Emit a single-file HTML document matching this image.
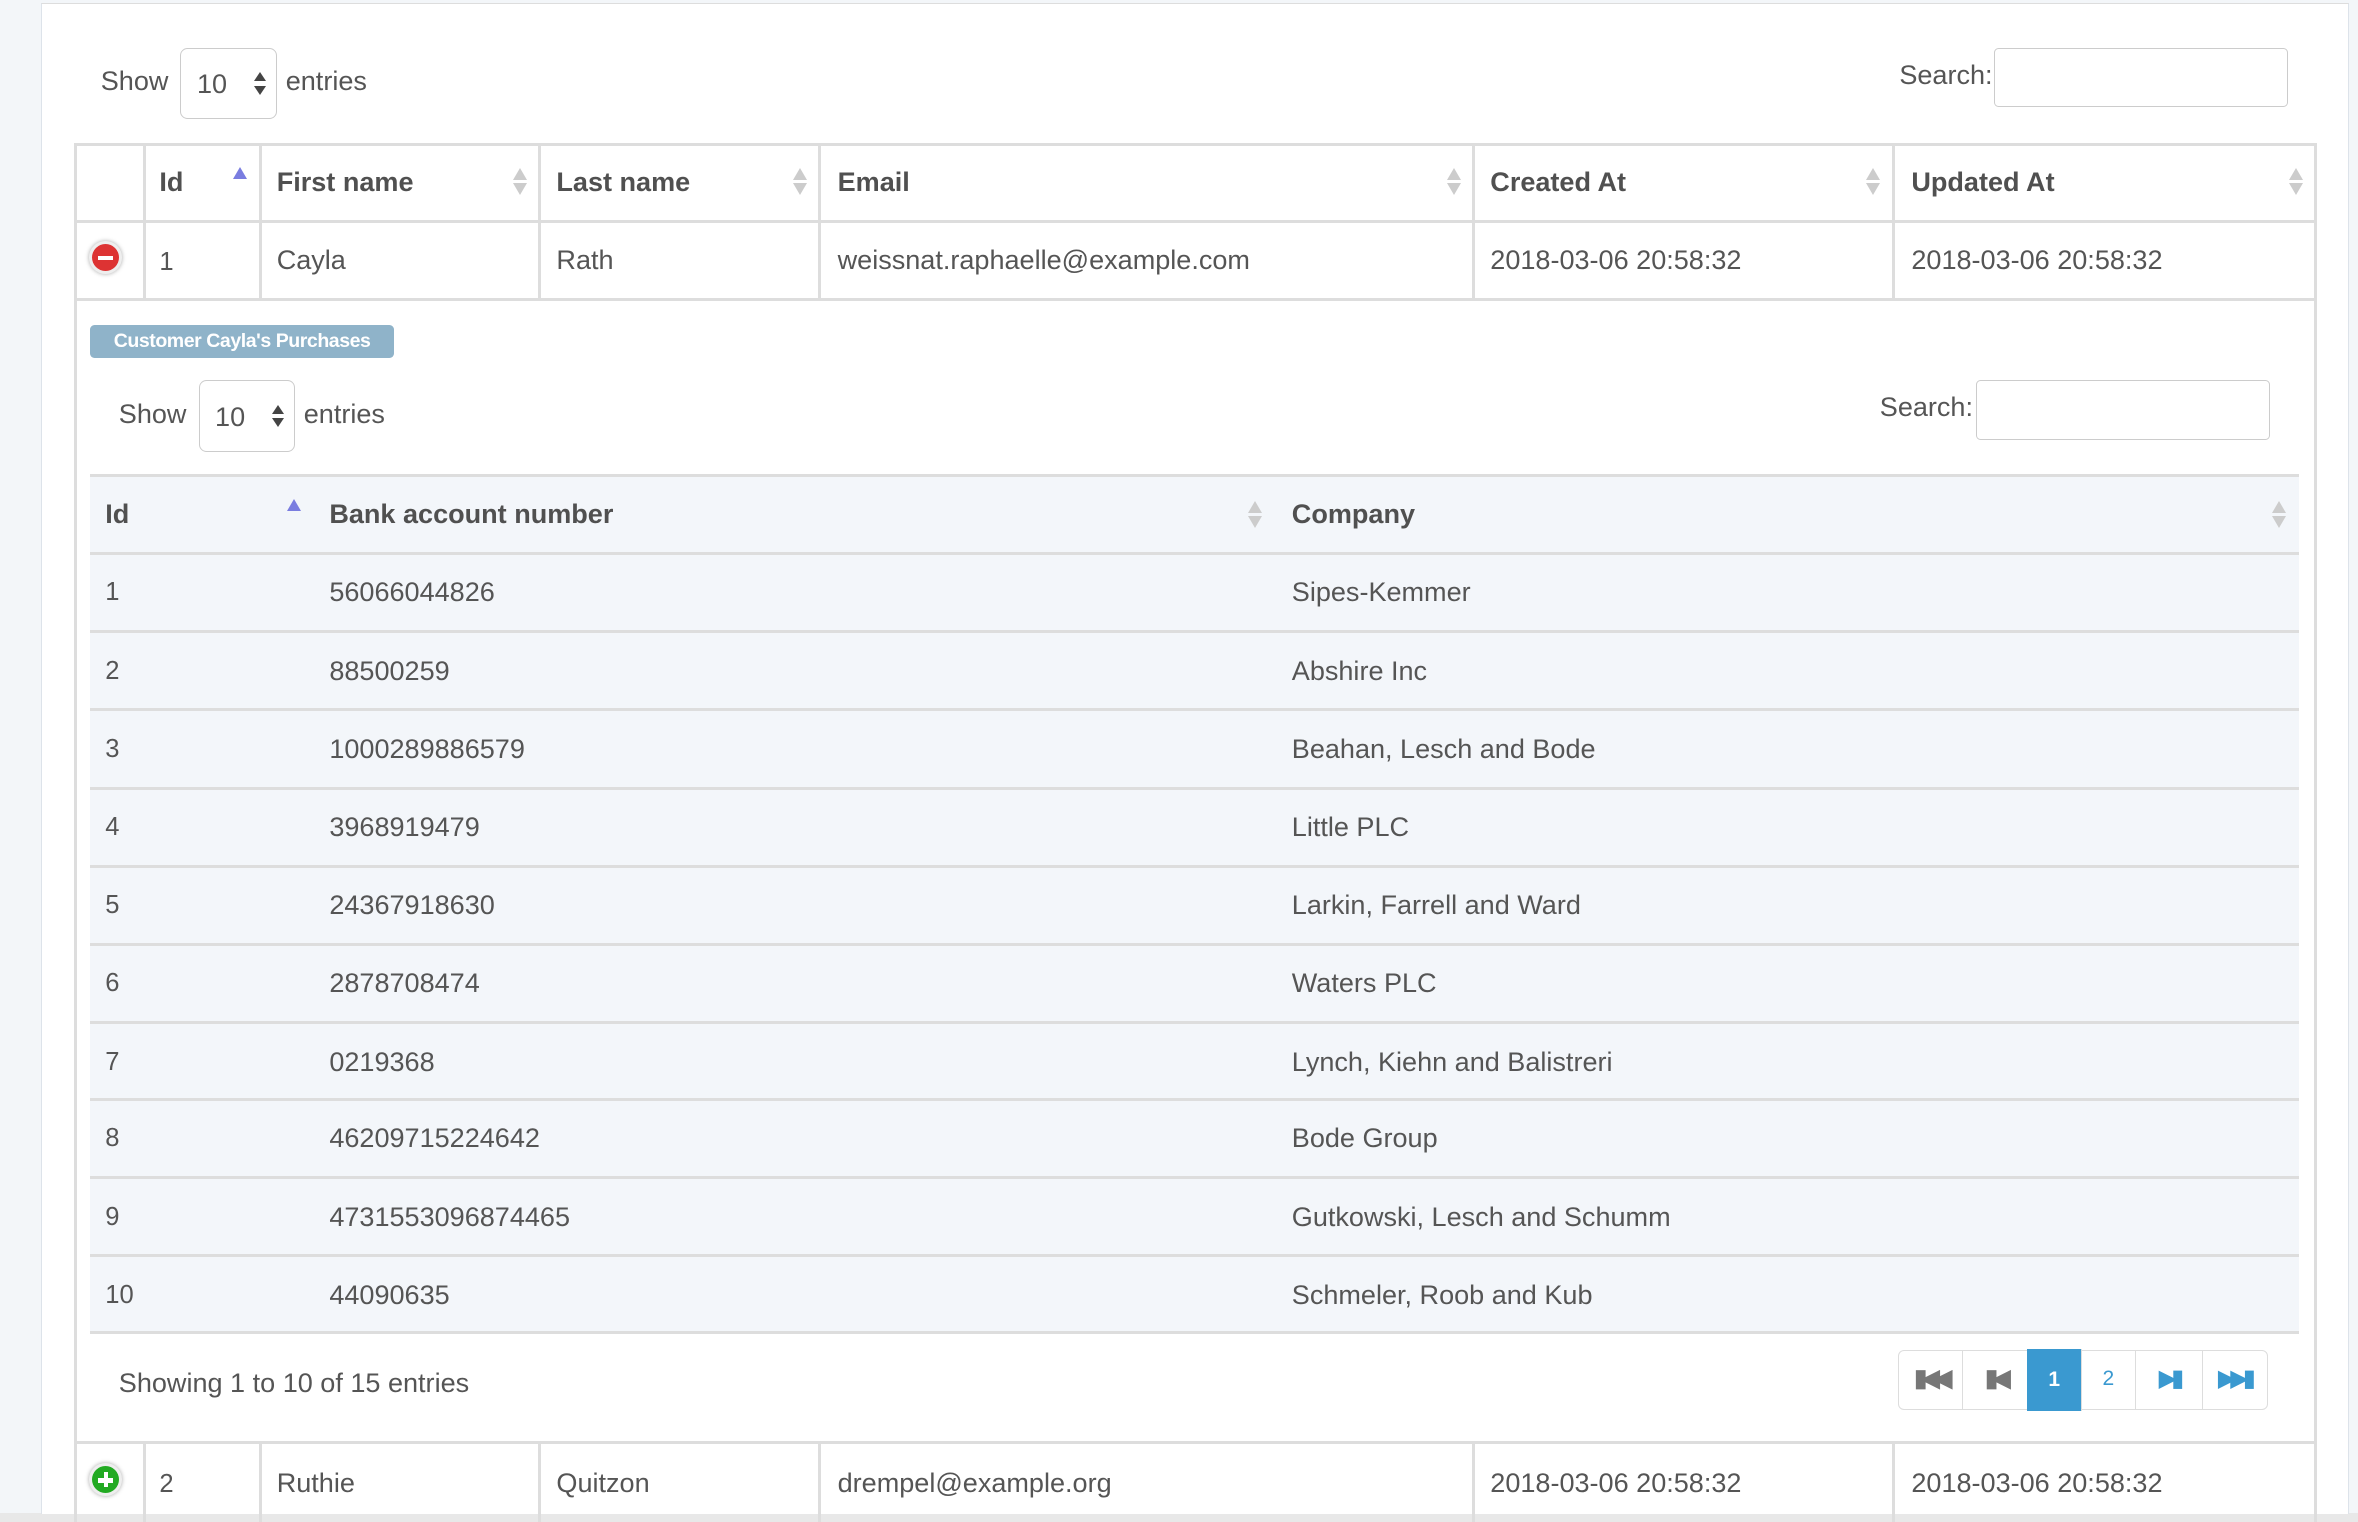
<!DOCTYPE html>
<html><head><meta charset="utf-8"><style>
html,body{margin:0;padding:0;background:#f3f6f9;overflow:hidden}
#r{zoom:1.50383;position:relative;width:1568px;height:1012px;font-family:"Liberation Sans",sans-serif;color:#555;font-size:18px;background:#f3f6f9}
.a{position:absolute}
#panel{left:27px;top:2px;width:1534px;height:1004px;background:#fff;border-left:1px solid #dde3ea;border-right:1px solid #dde3ea;border-top:1px solid #ddd}
.sel{border:1px solid #ccc;border-radius:5px;background:#fff}
.inp{border:1px solid #ccc;border-radius:3px;background:#fff}
.hl{background:#ddd;height:2px}
.vl{background:#ddd;width:2px}
.t{position:absolute;white-space:nowrap;line-height:20px}
.b{font-weight:bold;color:#505050}
.arr{position:absolute;width:0;height:0;border-left:5px solid transparent;border-right:5px solid transparent}
.up{border-bottom:8px solid #ccc}.dn{border-top:8px solid #ccc}
.pg{position:absolute;top:898px;height:39px;border-right:1px solid #ddd;text-align:center;line-height:39px;font-size:14px;color:#3a99d0}
</style></head><body><div id="r">
<div class="a" style="left:0;top:1006px;width:1568px;height:6px;background:#e8e8e8"></div>
<div class="a" id="panel"></div>

<div class="t" style="left:67px;top:44px">Show</div>
<div class="a sel" style="left:120px;top:32px;width:63px;height:46px"></div>
<div class="t" style="left:131px;top:46px">10</div>
<div class="arr" style="left:169px;top:48px;border-left-width:4px;border-right-width:4px;border-bottom:6px solid #444"></div>
<div class="arr" style="left:169px;top:57px;border-left-width:4px;border-right-width:4px;border-top:6px solid #444"></div>
<div class="t" style="left:190px;top:44px">entries</div>
<div class="t" style="left:1263px;top:40px">Search:</div>
<div class="a inp" style="left:1326px;top:32px;width:194px;height:38px"></div>

<!-- outer table -->
<div class="a" style="left:49px;top:95px;width:1491px;height:1px;background:#ddd"></div>
<div class="a" style="left:49px;top:95px;width:1492px;height:918px;border:2px solid #ddd;box-sizing:border-box;border-bottom:none"></div>
<div class="a hl" style="left:49px;top:146px;width:1491px"></div>
<div class="a hl" style="left:49px;top:198px;width:1491px"></div>
<div class="a hl" style="left:49px;top:958px;width:1491px"></div>
<div class="a vl" style="left:95px;top:95px;height:104px"></div>
<div class="a vl" style="left:172px;top:95px;height:104px"></div>
<div class="a vl" style="left:358px;top:95px;height:104px"></div>
<div class="a vl" style="left:544px;top:95px;height:104px"></div>
<div class="a vl" style="left:979px;top:95px;height:104px"></div>
<div class="a vl" style="left:1258px;top:95px;height:104px"></div>
<div class="a vl" style="left:95px;top:959px;height:53px"></div>
<div class="a vl" style="left:172px;top:959px;height:53px"></div>
<div class="a vl" style="left:358px;top:959px;height:53px"></div>
<div class="a vl" style="left:544px;top:959px;height:53px"></div>
<div class="a vl" style="left:979px;top:959px;height:53px"></div>
<div class="a vl" style="left:1258px;top:959px;height:53px"></div>

<div class="t b" style="left:106px;top:111px">Id</div>
<div class="arr" style="left:155px;top:111px;border-bottom:8px solid #7a7de0"></div>
<div class="t b" style="left:184px;top:111px">First name</div>
<div class="t b" style="left:370px;top:111px">Last name</div>
<div class="t b" style="left:557px;top:111px">Email</div>
<div class="t b" style="left:991px;top:111px">Created At</div>
<div class="t b" style="left:1271px;top:111px">Updated At</div>
<div class="arr up" style="left:341px;top:112px"></div><div class="arr dn" style="left:341px;top:122px"></div>
<div class="arr up" style="left:527px;top:112px"></div><div class="arr dn" style="left:527px;top:122px"></div>
<div class="arr up" style="left:962px;top:112px"></div><div class="arr dn" style="left:962px;top:122px"></div>
<div class="arr up" style="left:1241px;top:112px"></div><div class="arr dn" style="left:1241px;top:122px"></div>
<div class="arr up" style="left:1522px;top:112px"></div><div class="arr dn" style="left:1522px;top:122px"></div>

<div class="a" style="left:61px;top:162px;width:18px;height:18px;border-radius:50%;background:#d33;box-shadow:0 0 0 2px #eee,0 0 3px 2px #aaa"></div>
<div class="a" style="left:65px;top:170px;width:10px;height:3px;background:#fff"></div>
<div class="t" style="left:106px;top:164px;font-size:17px">1</div>
<div class="t" style="left:184px;top:163px">Cayla</div>
<div class="t" style="left:370px;top:163px">Rath</div>
<div class="t" style="left:557px;top:163px">weissnat.raphaelle@example.com</div>
<div class="t" style="left:991px;top:163px">2018-03-06 20:58:32</div>
<div class="t" style="left:1271px;top:163px">2018-03-06 20:58:32</div>

<div class="a" style="left:61px;top:975px;width:18px;height:18px;border-radius:50%;background:#2a2;box-shadow:0 0 0 2px #eee,0 0 3px 2px #aaa"></div>
<div class="a" style="left:65px;top:983px;width:10px;height:3px;background:#fff"></div>
<div class="a" style="left:69px;top:979px;width:3px;height:10px;background:#fff"></div>
<div class="t" style="left:106px;top:977px;font-size:17px">2</div>
<div class="t" style="left:184px;top:976px">Ruthie</div>
<div class="t" style="left:370px;top:976px">Quitzon</div>
<div class="t" style="left:557px;top:976px">drempel@example.org</div>
<div class="t" style="left:991px;top:976px">2018-03-06 20:58:32</div>
<div class="t" style="left:1271px;top:976px">2018-03-06 20:58:32</div>

<!-- nested -->
<div class="a" style="left:60px;top:216px;width:202px;height:22px;background:#8fb3c9;border-radius:3px;color:#fff;font-size:13px;font-weight:bold;line-height:22px;text-align:center;letter-spacing:-0.3px">Customer Cayla's Purchases</div>
<div class="t" style="left:79px;top:265px">Show</div>
<div class="a sel" style="left:132px;top:253px;width:63px;height:46px"></div>
<div class="t" style="left:143px;top:267px">10</div>
<div class="arr" style="left:181px;top:269px;border-left-width:4px;border-right-width:4px;border-bottom:6px solid #444"></div>
<div class="arr" style="left:181px;top:278px;border-left-width:4px;border-right-width:4px;border-top:6px solid #444"></div>
<div class="t" style="left:202px;top:265px">entries</div>
<div class="t" style="left:1250px;top:261px">Search:</div>
<div class="a inp" style="left:1314px;top:253px;width:194px;height:38px"></div>

<div class="a" style="left:60px;top:316px;width:1469px;height:571px;background:#f3f6fa"></div>
<div class="a hl" style="left:60px;top:315px;width:1469px"></div>
<div class="a hl" style="left:60px;top:367px;width:1469px"></div>
<div class="a hl" style="left:60px;top:419px;width:1469px"></div>
<div class="a hl" style="left:60px;top:471px;width:1469px"></div>
<div class="a hl" style="left:60px;top:523px;width:1469px"></div>
<div class="a hl" style="left:60px;top:575px;width:1469px"></div>
<div class="a hl" style="left:60px;top:627px;width:1469px"></div>
<div class="a hl" style="left:60px;top:679px;width:1469px"></div>
<div class="a hl" style="left:60px;top:730px;width:1469px"></div>
<div class="a hl" style="left:60px;top:782px;width:1469px"></div>
<div class="a hl" style="left:60px;top:834px;width:1469px"></div>
<div class="a hl" style="left:60px;top:885px;width:1469px"></div>

<div class="t b" style="left:70px;top:332px">Id</div>
<div class="arr" style="left:191px;top:332px;border-bottom:8px solid #7a7de0"></div>
<div class="t b" style="left:219px;top:332px">Bank account number</div>
<div class="arr up" style="left:830px;top:333px"></div><div class="arr dn" style="left:830px;top:343px"></div>
<div class="t b" style="left:859px;top:332px">Company</div>
<div class="arr up" style="left:1511px;top:333px"></div><div class="arr dn" style="left:1511px;top:343px"></div>

<div class="t" style="left:70px;top:384px;font-size:17px">1</div><div class="t" style="left:219px;top:384px">56066044826</div><div class="t" style="left:859px;top:384px">Sipes-Kemmer</div>
<div class="t" style="left:70px;top:436px;font-size:17px">2</div><div class="t" style="left:219px;top:436px">88500259</div><div class="t" style="left:859px;top:436px">Abshire Inc</div>
<div class="t" style="left:70px;top:488px;font-size:17px">3</div><div class="t" style="left:219px;top:488px">1000289886579</div><div class="t" style="left:859px;top:488px">Beahan, Lesch and Bode</div>
<div class="t" style="left:70px;top:540px;font-size:17px">4</div><div class="t" style="left:219px;top:540px">3968919479</div><div class="t" style="left:859px;top:540px">Little PLC</div>
<div class="t" style="left:70px;top:592px;font-size:17px">5</div><div class="t" style="left:219px;top:592px">24367918630</div><div class="t" style="left:859px;top:592px">Larkin, Farrell and Ward</div>
<div class="t" style="left:70px;top:644px;font-size:17px">6</div><div class="t" style="left:219px;top:644px">2878708474</div><div class="t" style="left:859px;top:644px">Waters PLC</div>
<div class="t" style="left:70px;top:696px;font-size:17px">7</div><div class="t" style="left:219px;top:696px">0219368</div><div class="t" style="left:859px;top:696px">Lynch, Kiehn and Balistreri</div>
<div class="t" style="left:70px;top:747px;font-size:17px">8</div><div class="t" style="left:219px;top:747px">46209715224642</div><div class="t" style="left:859px;top:747px">Bode Group</div>
<div class="t" style="left:70px;top:799px;font-size:17px">9</div><div class="t" style="left:219px;top:799px">4731553096874465</div><div class="t" style="left:859px;top:799px">Gutkowski, Lesch and Schumm</div>
<div class="t" style="left:70px;top:851px;font-size:17px">10</div><div class="t" style="left:219px;top:851px">44090635</div><div class="t" style="left:859px;top:851px">Schmeler, Roob and Kub</div>

<div class="t" style="left:79px;top:910px">Showing 1 to 10 of 15 entries</div>

<div class="a" style="left:1262px;top:898px;width:245px;height:38px;border:1px solid #ddd;border-radius:4px"></div>
<div class="pg" style="left:1262px;width:43px;color:#777;font-weight:bold;font-size:16px;letter-spacing:-4px">▮◀◀</div>
<div class="pg" style="left:1305px;width:43px;color:#777;font-weight:bold;font-size:16px;letter-spacing:-4px">▮◀</div>
<div class="pg" style="left:1348px;top:897px;height:41px;line-height:41px;width:36px;background:#3a99d0;color:#fff;font-weight:bold">1</div>
<div class="pg" style="left:1384px;width:36px">2</div>
<div class="pg" style="left:1420px;width:44px;font-size:16px;letter-spacing:-4px">▶▮</div>
<div class="pg" style="left:1464px;width:43px;border-right:none;font-size:16px;letter-spacing:-4px">▶▶▮</div>
</div></body></html>
